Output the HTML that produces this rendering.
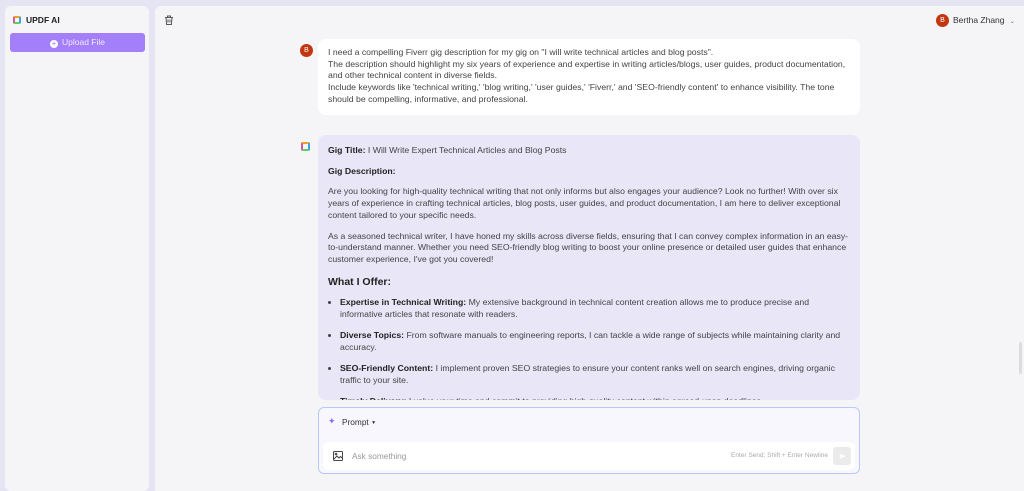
<!DOCTYPE html>
<html><head><meta charset="utf-8"><style>
*{margin:0;padding:0;box-sizing:border-box}
body{width:1024px;height:485px;overflow:hidden;background:#e4e4f3;font-family:"Liberation Sans",sans-serif;position:relative;color:#333}
.left{position:absolute;left:5px;top:6px;width:144px;height:485px;background:#f5f5f8;border-radius:6px}
.main{position:absolute;left:155px;top:6px;width:869px;height:485px;background:#f5f5f8;border-radius:6px 0 0 0}
.bub{position:absolute;left:318px;width:542px;border-radius:8px;font-size:8.7px;line-height:11.7px;color:#444}
.u{top:39px;height:76px;background:#fff;padding:8px 10px}
.a{top:135px;height:265px;background:#e8e6f7;padding:10px 10px;overflow:hidden}
.a p{margin-bottom:9px}
.a b{color:#222}
.a ul{padding-left:12px}
.a li{margin-bottom:9.5px}
.av{position:absolute;width:13px;height:13px;border-radius:50%;background:#c2370f;color:#fff;font-size:7px;text-align:center;line-height:13px}
</style></head><body>
<div class="left">
 <div style="position:absolute;left:8px;top:10px;width:8px;height:8px;border:2px solid #9b6cf5;border-radius:2px;border-color:#f0a020 #3aa0f0 #5bd05b #e050a0"></div>
 <div style="position:absolute;left:21px;top:9px;font-size:8.5px;font-weight:bold;color:#222">UPDF AI</div>
 <div style="position:absolute;left:5px;top:27px;width:135px;height:19px;background:#a47ffa;border-radius:3px;color:#f0eaff;font-size:8.5px;text-align:center;line-height:19px"><span style="display:inline-block;width:8px;height:8px;border-radius:50%;background:#fff;vertical-align:-1px;margin-right:4px;color:#a47ffa;font-size:8px;line-height:8px">+</span>Upload File</div>
</div>
<div class="main">
 <svg style="position:absolute;left:9px;top:9px" width="10" height="10" viewBox="0 0 10 10" fill="none" stroke="#555" stroke-width="1"><path d="M1 2.5h8M3.5 2.5V1h3v1.5M2 2.5l.6 7h4.8l.6-7M4 4.5v3M6 4.5v3"/></svg>
 <div class="av" style="left:781px;top:8px">B</div>
 <div style="position:absolute;left:798px;top:9px;font-size:8.5px;color:#333">Bertha Zhang <span style="font-size:6px;color:#666;margin-left:3px">⌄</span></div>
</div>
<div class="av" style="left:300px;top:44px">B</div>
<div class="bub u">I need a compelling Fiverr gig description for my gig on "I will write technical articles and blog posts".<br>The description should highlight my six years of experience and expertise in writing articles/blogs, user guides, product documentation,<br>and other technical content in diverse fields.<br>Include keywords like 'technical writing,' 'blog writing,' 'user guides,' 'Fiverr,' and 'SEO-friendly content' to enhance visibility. The tone<br>should be compelling, informative, and professional.</div>
<div style="position:absolute;left:301px;top:142px;width:9px;height:9px;border:2px solid;border-radius:2px;border-color:#f0a020 #3aa0f0 #5bd05b #e050a0"></div>
<div class="bub a">
<p><b>Gig Title:</b> I Will Write Expert Technical Articles and Blog Posts</p>
<p><b>Gig Description:</b></p>
<p>Are you looking for high-quality technical writing that not only informs but also engages your audience? Look no further! With over six years of experience in crafting technical articles, blog posts, user guides, and product documentation, I am here to deliver exceptional content tailored to your specific needs.</p>
<p>As a seasoned technical writer, I have honed my skills across diverse fields, ensuring that I can convey complex information in an easy-to-understand manner. Whether you need SEO-friendly blog writing to boost your online presence or detailed user guides that enhance customer experience, I've got you covered!</p>
<p style="font-size:10.5px;font-weight:bold;color:#222;margin-bottom:9px;margin-top:11px">What I Offer:</p>
<ul>
<li><b>Expertise in Technical Writing:</b> My extensive background in technical content creation allows me to produce precise and informative articles that resonate with readers.</li>
<li><b>Diverse Topics:</b> From software manuals to engineering reports, I can tackle a wide range of subjects while maintaining clarity and accuracy.</li>
<li><b>SEO-Friendly Content:</b> I implement proven SEO strategies to ensure your content ranks well on search engines, driving organic traffic to your site.</li>
<li><b>Timely Delivery:</b> I value your time and commit to providing high-quality content within agreed-upon deadlines.</li>
</ul>
</div>
<div style="position:absolute;left:318px;top:407px;width:542px;height:67px;background:#f7f7fd;border:1px solid #b9c8fb;border-radius:6px">
 <div style="position:absolute;left:9px;top:8px;color:#8a6cf5;font-size:9px">✦</div>
 <div style="position:absolute;left:23px;top:9px;font-size:8.3px;color:#333">Prompt <span style="font-size:5px;vertical-align:1px">▼</span></div>
 <div style="position:absolute;left:4px;top:34px;width:532px;height:28px;background:#fff;border-radius:5px">
  <svg style="position:absolute;left:10px;top:9px" width="10" height="10" viewBox="0 0 10 10" fill="none" stroke="#444" stroke-width="1"><rect x=".5" y=".5" width="9" height="9" rx="1"/><path d="M1 8l3-3 2 2 1.5-1.5L9 7"/><circle cx="3" cy="3" r=".8"/></svg>
  <div style="position:absolute;left:29px;top:9px;font-size:8.3px;color:#999">Ask something</div>
  <div style="position:absolute;right:27px;top:10px;font-size:6.5px;color:#aaa">Enter Send; Shift + Enter Newline</div>
  <div style="position:absolute;right:4px;top:5px;width:18px;height:18px;background:#ebebeb;border-radius:3px;color:#fff;font-size:9px;text-align:center;line-height:18px">➤</div>
 </div>
</div>
<div style="position:absolute;left:1019px;top:342px;width:3px;height:32px;background:#ddd;border-radius:2px"></div>
</body></html>
